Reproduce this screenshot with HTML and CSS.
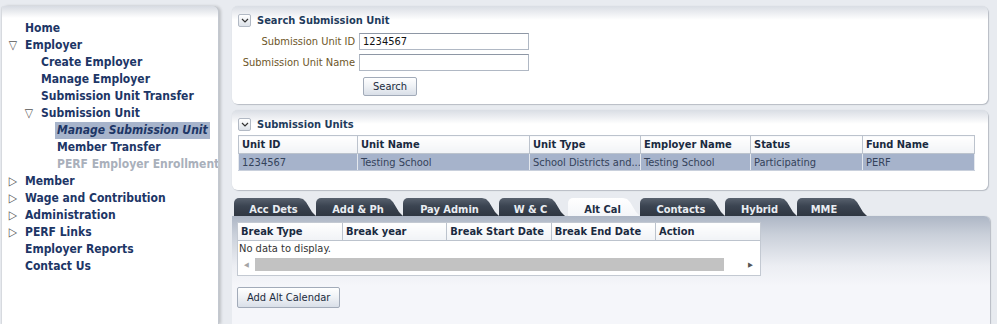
FILE: index.html
```html
<!DOCTYPE html>
<html lang="en">
<head>
  <meta charset="UTF-8">
  <title>Manage Submission Unit</title>
  <link rel="stylesheet" href="styles.css">
</head>
<body>

<div class="nav">
  <ul class="tree">
    <li class="lvl0"><span class="twisty"></span><a>Home</a></li>
    <li class="lvl0"><span class="twisty">&#9661;</span><a>Employer</a></li>
    <li class="lvl1"><span class="twisty"></span><a>Create Employer</a></li>
    <li class="lvl1"><span class="twisty"></span><a>Manage Employer</a></li>
    <li class="lvl1"><span class="twisty"></span><a>Submission Unit Transfer</a></li>
    <li class="lvl1"><span class="twisty">&#9661;</span><a>Submission Unit</a></li>
    <li class="lvl2"><span class="twisty"></span><a class="current">Manage Submission Unit</a></li>
    <li class="lvl2"><span class="twisty"></span><a>Member Transfer</a></li>
    <li class="lvl2"><span class="twisty"></span><a class="disabled">PERF Employer Enrollment</a></li>
    <li class="lvl0"><span class="twisty">&#9655;</span><a>Member</a></li>
    <li class="lvl0"><span class="twisty">&#9655;</span><a>Wage and Contribution</a></li>
    <li class="lvl0"><span class="twisty">&#9655;</span><a>Administration</a></li>
    <li class="lvl0"><span class="twisty">&#9655;</span><a>PERF Links</a></li>
    <li class="lvl0"><span class="twisty"></span><a>Employer Reports</a></li>
    <li class="lvl0"><span class="twisty"></span><a>Contact Us</a></li>
  </ul>
</div>

<div class="main">

  <div class="panel search-panel">
    <div class="panel-head">
      <span class="toggle"><svg width="8" height="5" viewBox="0 0 8 5"><path d="M1 1 L4 4 L7 1" fill="none" stroke="#333" stroke-width="1.2"/></svg></span>
      <span class="panel-title">Search Submission Unit</span>
    </div>
    <div class="form">
      <label for="suId">Submission Unit ID</label>
      <input id="suId" type="text" value="1234567">
      <label for="suName">Submission Unit Name</label>
      <input id="suName" type="text" value="">
      <span></span>
      <div><button class="btn search-btn">Search</button></div>
    </div>
  </div>

  <div class="panel units-panel">
    <div class="panel-head">
      <span class="toggle"><svg width="8" height="5" viewBox="0 0 8 5"><path d="M1 1 L4 4 L7 1" fill="none" stroke="#333" stroke-width="1.2"/></svg></span>
      <span class="panel-title">Submission Units</span>
    </div>
    <table class="grid units">
      <colgroup>
        <col style="width:119px">
        <col style="width:172px">
        <col style="width:111px">
        <col style="width:110px">
        <col style="width:112px">
        <col style="width:112px">
      </colgroup>
      <tr>
        <th>Unit ID</th>
        <th>Unit Name</th>
        <th>Unit Type</th>
        <th>Employer Name</th>
        <th>Status</th>
        <th>Fund Name</th>
      </tr>
      <tr class="selected">
        <td>1234567</td>
        <td>Testing School</td>
        <td>School Districts and...</td>
        <td>Testing School</td>
        <td>Participating</td>
        <td>PERF</td>
      </tr>
    </table>
  </div>

  <div class="tabs">
    <div class="tab t-acc">Acc Dets</div>
    <div class="tab t-add">Add &amp; Ph</div>
    <div class="tab t-pay">Pay Admin</div>
    <div class="tab t-wc">W &amp; C</div>
    <div class="tab t-alt active">Alt Cal</div>
    <div class="tab t-con">Contacts</div>
    <div class="tab t-hyb">Hybrid</div>
    <div class="tab t-mme">MME</div>
  </div>

  <div class="tab-body">
    <div class="breaks">
      <table class="grid">
        <tr>
          <th>Break Type</th>
          <th>Break year</th>
          <th>Break Start Date</th>
          <th>Break End Date</th>
          <th>Action</th>
        </tr>
      </table>
      <div class="empty">No data to display.</div>
      <div class="hscroll">
        <span class="arrow">&#9664;</span>
        <span class="track"></span>
        <span class="arrow">&#9654;</span>
      </div>
    </div>
    <button class="btn add-btn">Add Alt Calendar</button>
  </div>

</div>

</body>
</html>
```

FILE: styles.css
```css
body {
  margin: 0;
  padding: 6px 0 0 2px;
  height: 318px;
  overflow: hidden;
  background: #e8ebf0;
  font-family: "DejaVu Sans", Tahoma, sans-serif;
  font-stretch: condensed;
  font-size: 11px;
  display: flex;
  gap: 14px;
}

/* left navigation */
.nav {
  width: 216px;
  flex: none;
  background: linear-gradient(#d7dbe2 0, #ffffff 12px);
  border-radius: 3px 6px 0 0;
  box-shadow: 1px 0 0 #c3c8d0, 3px 0 3px rgba(0,0,0,0.18), -1px 0 1px rgba(0,0,0,0.08);
  overflow: hidden;
}
.tree {
  list-style: none;
  margin: 0;
  padding: 14px 0 0 0;
}
.tree li {
  height: 17px;
  line-height: 17px;
  white-space: nowrap;
  display: flex;
}
.tree .twisty {
  width: 20px;
  flex: none;
  font-size: 12px;
  color: #555;
  text-align: center;
}
.lvl0 { padding-left: 1px; }
.lvl1 { padding-left: 17px; }
.lvl2 { padding-left: 33px; }
.tree a {
  font-size: 12px;
  font-weight: bold;
  color: #1d3666;
  padding: 0 2px;
}
.tree a.current {
  font-style: italic;
  background: #a7b4cb;
  color: #1d3666;
}
.tree a.disabled {
  color: #a9b0bb;
}

/* right side */
.main {
  width: 758px;
  display: flex;
  flex-direction: column;
}
.panel {
  background: linear-gradient(#d9dde4 0, #ffffff 14px);
  border-radius: 6px;
  box-shadow: 1px 1px 1px #b7bcc4, 0 0 1px rgba(0,0,0,0.15);
  width: 756px;
}
.panel-head {
  display: flex;
  align-items: center;
  height: 14px;
  padding: 7px 0 0 6px;
}
.toggle {
  width: 11px;
  height: 11px;
  border: 1px solid #b2b9c4;
  border-radius: 2px;
  background: linear-gradient(#ffffff, #dde2e9);
  display: flex;
  align-items: center;
  justify-content: center;
  margin-right: 6px;
}
.panel-title {
  font-size: 11px;
  font-weight: bold;
  color: #1f3c5c;
}

.search-panel {
  height: 98px;
}
.form {
  display: grid;
  grid-template-columns: 123px 170px;
  column-gap: 4px;
  row-gap: 4px;
  align-items: center;
  margin-top: 6px;
}
.form label {
  text-align: right;
  color: #6d5628;
  font-size: 11px;
}
.form input {
  box-sizing: border-box;
  height: 17px;
  width: 170px;
  border: 1px solid #b0b8c4;
  border-top-color: #8e97a5;
  font: inherit;
  font-size: 11px;
  padding: 0 3px;
  color: #111;
}
.btn {
  font: inherit;
  font-size: 11px;
  color: #1b2b3d;
  border: 1px solid #a2abb9;
  border-radius: 2px;
  background: linear-gradient(#ffffff 0, #eef1f5 50%, #d9dfe8 100%);
  padding: 0 9px;
  height: 19px;
}
.search-btn {
  margin-left: 4px;
  margin-top: 2px;
}

.units-panel {
  margin-top: 6px;
  height: 80px;
}
.grid {
  border-collapse: collapse;
  font-size: 11px;
}
.grid th {
  text-align: left;
  font-weight: bold;
  color: #1a2a40;
  background: linear-gradient(#ffffff, #f1f3f6);
  border: 1px solid #bcc3cd;
  height: 17px;
  padding: 0 3px;
}
.grid td {
  border: 1px solid #d2d7df;
  height: 16px;
  padding: 0 3px;
  color: #34425a;
  white-space: nowrap;
  overflow: hidden;
}
.units {
  margin: 4px 0 0 6px;
  width: 736px;
  table-layout: fixed;
}
.units .selected td {
  background: #a6b3cb;
  border-color: #c9d0dc #e4e8ee;
}

/* tabs */
.tabs {
  display: flex;
  margin-top: 8px;
  padding-left: 2px;
  height: 18px;
}
.tab {
  box-sizing: border-box;
  height: 18px;
  line-height: 17px;
  padding: 3px 3px 0 0;
  text-align: center;
  font-size: 11px;
  font-weight: bold;
  color: #e9edf2;
  background: linear-gradient(#58616e 0, #3b4451 45%, #2f3641 100%);
  border-radius: 5px 0 0 0;
  clip-path: polygon(0 0, calc(100% - 17px) 0, calc(100% - 13px) 1px, calc(100% - 10px) 4px,
    calc(100% - 7px) 9px, calc(100% - 4px) 14px, calc(100% - 1px) 17px, 100% 18px, 0 18px);
  white-space: nowrap;
}
.t-acc { width: 82px; }
.t-add { width: 87px; }
.t-pay { width: 96px; }
.t-wc  { width: 66px; }
.t-alt { width: 72px; margin-left: 3px; }
.t-con { width: 85px; }
.t-hyb { width: 72px; }
.t-mme { width: 70px; padding-right: 16px; }
.tab.active {
  color: #1d2d44;
  background: linear-gradient(#ffffff 0, #f4f6f9 100%);
}

.tab-body {
  flex: 1;
  background: linear-gradient(#adb6c5 0, #c9cfd9 18px, #eceef3 50px, #f5f6fa 70px);
  border-radius: 0 6px 0 0;
  box-shadow: 1px 0 1px #b7bcc4;
  padding: 6px 0 0 5px;
  width: 753px;
}
.breaks {
  width: 522px;
  background: #fff;
  border: 1px solid #c3c9d2;
}
.breaks .grid {
  width: 100%;
  table-layout: fixed;
}
.breaks .grid th {
  border-top: none;
  height: 17px;
}
.breaks .grid th:first-child { border-left: none; }
.breaks .grid th:last-child { border-right: none; }
.empty {
  height: 16px;
  line-height: 15px;
  padding-left: 1px;
  color: #333;
}
.hscroll {
  display: flex;
  align-items: center;
  height: 15px;
  margin-bottom: 3px;
}
.hscroll .arrow {
  width: 17px;
  font-size: 7px;
  color: #a5a5a5;
  text-align: center;
}
.hscroll .arrow:last-child {
  color: #555;
  margin-left: 18px;
}
.hscroll .track {
  width: 469px;
  height: 13px;
  background: #c2c2c2;
}
.add-btn {
  margin-top: 11px;
  height: 21px;
  padding: 0 9px;
}
```
